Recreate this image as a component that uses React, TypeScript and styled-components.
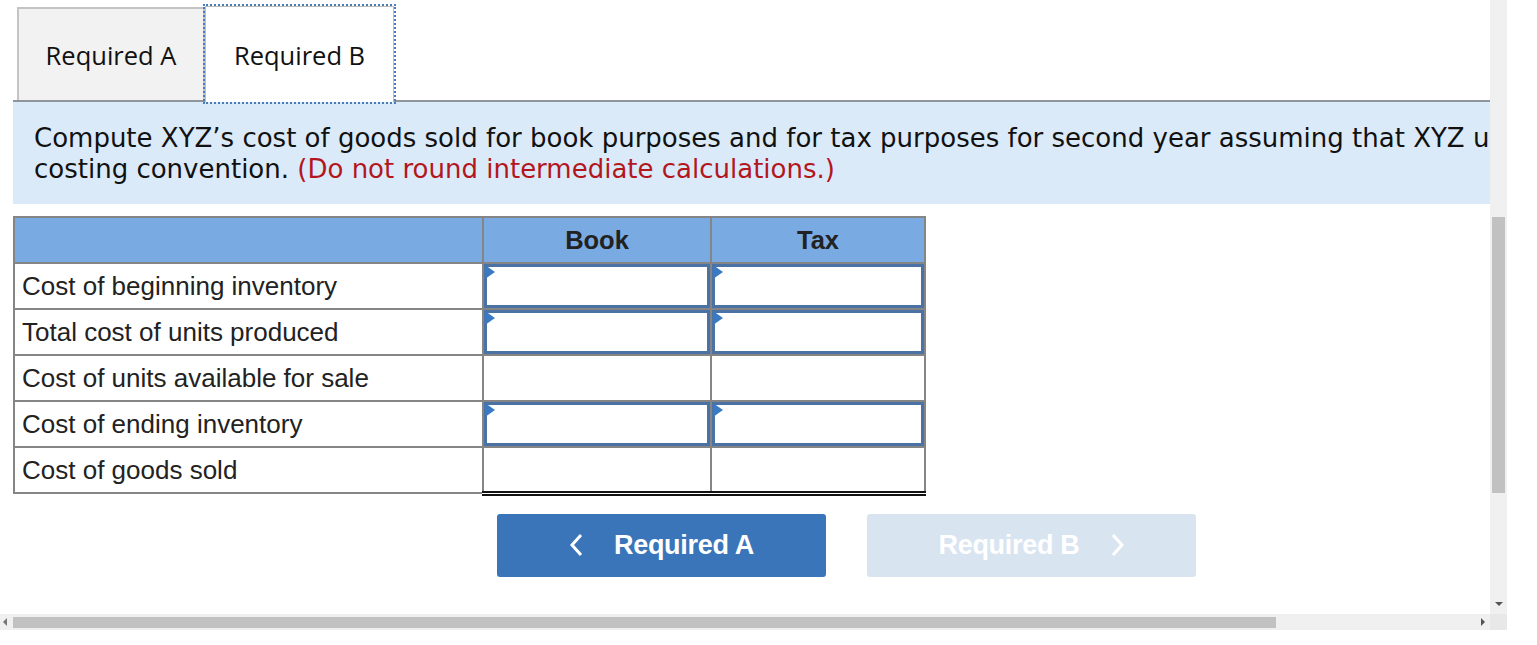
import React from 'react';
import styled, { createGlobalStyle } from 'styled-components';

const GlobalStyle = createGlobalStyle`
  body {
    margin: 0;
    background: #fff;
  }
`;

const Frame = styled.div`
  display: grid;
  grid-template-columns: 1490px 17px;
  grid-template-rows: 614px 16px;
  width: 1507px;
`;

const Viewport = styled.div`
  overflow: hidden;
`;

const Content = styled.div`
  width: 1900px;
  padding-left: 13px;
  box-sizing: border-box;
`;

const TabBar = styled.div`
  display: flex;
  align-items: flex-end;
  height: 102px;
  padding-left: 4px;
  border-bottom: 2px solid #8e959b;
  box-sizing: border-box;
`;

const Tab = styled.div<{ $active?: boolean }>`
  display: flex;
  align-items: center;
  justify-content: center;
  box-sizing: border-box;
  width: ${(p) => (p.$active ? '189px' : '188px')};
  height: ${(p) => (p.$active ? '96px' : '93px')};
  margin-bottom: ${(p) => (p.$active ? '-2px' : '0')};
  background: ${(p) => (p.$active ? '#fff' : '#f2f2f2')};
  border: ${(p) => (p.$active ? '1px solid #bdbdbd' : '2px solid #c4c4c4')};
  border-bottom: none;
  outline: ${(p) => (p.$active ? '2px dotted #4a7db5' : 'none')};
  font-family: 'Open Sans', sans-serif;
  font-size: 25.5px;
  color: #111;
`;

const Prompt = styled.div`
  background: #dbeaf8;
  padding: 21px 21px 19px;
  font-family: 'DejaVu Sans', Verdana, sans-serif;
  font-size: 26px;
  line-height: 31px;
  color: #111;
  white-space: nowrap;
`;

const Hint = styled.span`
  color: #b3161d;
`;

const Table = styled.table`
  margin-top: 12px;
  border-collapse: collapse;
  border: 2px solid #7a7a7a;
  table-layout: fixed;
  width: 911px;
`;

const HeadCell = styled.th`
  height: 44px;
  background: #79abe2;
  border: 2px solid #858585;
  font-family: 'Liberation Sans', Arial, sans-serif;
  font-weight: bold;
  font-size: 25.5px;
  color: #222;
  padding: 0;
`;

const LabelCell = styled.td`
  height: 44px;
  border: 2px solid #858585;
  padding: 0 0 0 7px;
  font-family: 'Liberation Sans', Arial, sans-serif;
  font-size: 26px;
  color: #222;
`;

const ValueCell = styled.td<{ $total?: 'single' | 'double' }>`
  padding: 0;
  border: 2px solid #858585;
  border-top: ${(p) => (p.$total ? '2px solid #111' : '2px solid #858585')};
  border-bottom: ${(p) => (p.$total === 'double' ? '5px double #111' : '2px solid #858585')};
`;

const InputBox = styled.div`
  position: relative;
  height: 44px;
  box-sizing: border-box;
  border: 3px solid #4a72a4;
  background: #fff;
`;

const Flag = styled.span`
  position: absolute;
  top: -2px;
  left: -2px;
  width: 0;
  height: 0;
  border-left: 10px solid #3a79c4;
  border-top: 7px solid transparent;
  border-bottom: 7px solid transparent;
`;

const NavRow = styled.div`
  display: flex;
  gap: 41px;
  margin: 18px 0 0 484px;
`;

const NavButton = styled.div<{ $disabled?: boolean }>`
  display: flex;
  align-items: center;
  justify-content: center;
  gap: 30px;
  width: 329px;
  height: 63px;
  border-radius: 3px;
  background: ${(p) => (p.$disabled ? '#d9e4f1' : '#3a75ba')};
  color: #fff;
  font-family: 'Liberation Sans', Arial, sans-serif;
  font-weight: bold;
  font-size: 27px;
  letter-spacing: -0.3px;
`;

const VScroll = styled.div`
  display: flex;
  flex-direction: column;
  align-items: center;
  background: #f0f0f0;
`;

const VThumb = styled.div`
  width: 13px;
  height: 276px;
  margin-top: 217px;
  background: #c1c1c1;
`;

const HScroll = styled.div`
  display: flex;
  align-items: center;
  padding: 0 5px 0 3px;
  background: #f0f0f0;
`;

const HThumb = styled.div`
  width: 1263px;
  height: 11px;
  margin-left: 6px;
  margin-right: auto;
  background: #c1c1c1;
`;

const Corner = styled.div`
  background: #e8e8e8;
`;

const Arrow = styled.span<{ $dir: 'left' | 'right' | 'down' }>`
  width: 0;
  height: 0;
  ${(p) =>
    p.$dir === 'down'
      ? `border-top: 4px solid #555; border-left: 4px solid transparent; border-right: 4px solid transparent; margin-top: auto; margin-bottom: 8px;`
      : p.$dir === 'left'
      ? `border-right: 4px solid #777; border-top: 4px solid transparent; border-bottom: 4px solid transparent;`
      : `border-left: 4px solid #555; border-top: 4px solid transparent; border-bottom: 4px solid transparent;`}
`;

const Chevron = ({ dir }: { dir: 'left' | 'right' }) => (
  <svg width="15" height="24" viewBox="0 0 15 24">
    <polyline
      points={dir === 'left' ? '12,2 3,12 12,22' : '3,2 12,12 3,22'}
      fill="none"
      stroke="#fff"
      strokeWidth="3"
    />
  </svg>
);

type Row = { label: string; input?: boolean; total?: 'single' | 'double' };

const rows: Row[] = [
  { label: 'Cost of beginning inventory', input: true },
  { label: 'Total cost of units produced', input: true },
  { label: 'Cost of units available for sale', total: 'single' },
  { label: 'Cost of ending inventory', input: true },
  { label: 'Cost of goods sold', total: 'double' },
];

const Value = ({ row }: { row: Row }) => (
  <ValueCell $total={row.total}>
    {row.input ? (
      <InputBox>
        <Flag />
      </InputBox>
    ) : null}
  </ValueCell>
);

const App = () => {
  return (
    <>
      <GlobalStyle />
      <Frame>
        <Viewport>
          <Content>
            <TabBar>
              <Tab>Required A</Tab>
              <Tab $active>Required B</Tab>
            </TabBar>
            <Prompt>
              Compute XYZ’s cost of goods sold for book purposes and for tax purposes for second year assuming that XYZ uses the LIFO inventory
              <br />
              costing convention. <Hint>(Do not round intermediate calculations.)</Hint>
            </Prompt>
            <Table>
              <colgroup>
                <col style={{ width: 469 }} />
                <col style={{ width: 228 }} />
                <col style={{ width: 214 }} />
              </colgroup>
              <thead>
                <tr>
                  <HeadCell />
                  <HeadCell>Book</HeadCell>
                  <HeadCell>Tax</HeadCell>
                </tr>
              </thead>
              <tbody>
                {rows.map((row) => (
                  <tr key={row.label}>
                    <LabelCell>{row.label}</LabelCell>
                    <Value row={row} />
                    <Value row={row} />
                  </tr>
                ))}
              </tbody>
            </Table>
            <NavRow>
              <NavButton>
                <Chevron dir="left" />
                <span>Required A</span>
              </NavButton>
              <NavButton $disabled>
                <span>Required B</span>
                <Chevron dir="right" />
              </NavButton>
            </NavRow>
          </Content>
        </Viewport>
        <VScroll>
          <VThumb />
          <Arrow $dir="down" />
        </VScroll>
        <HScroll>
          <Arrow $dir="left" />
          <HThumb />
          <Arrow $dir="right" />
        </HScroll>
        <Corner />
      </Frame>
    </>
  );
};

export default App;
